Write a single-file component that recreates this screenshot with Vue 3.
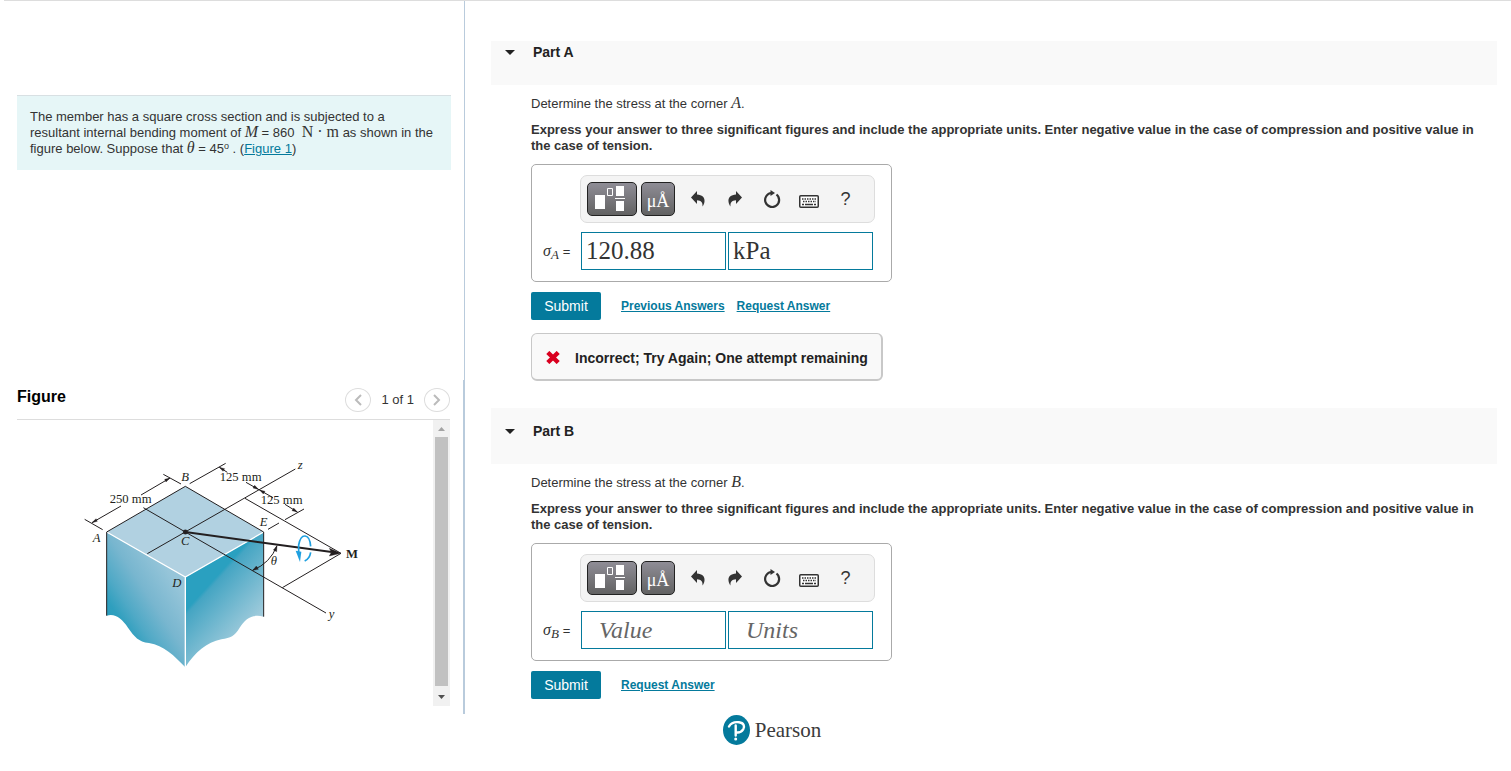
<template>
  <div class="page">
    <div class="columns">
      <aside class="left">
        <div class="intro">
          The member has a square cross section and is subjected to a resultant internal bending moment of
          <i class="math">M</i> = 860 &nbsp;<span class="math">N · m</span> as shown in the figure below. Suppose that
          <i class="math">θ</i> = 45<span class="deg">o</span> . (<a href="#figure">Figure 1</a>)
        </div>

        <section id="figure" class="figure">
          <div class="figure-head">
            <h2>Figure</h2>
            <div class="pager">
              <button type="button" class="round" aria-label="Previous figure">
                <svg width="10" height="14" viewBox="0 0 10 14"><path d="M8 2L3 7l5 5" /></svg>
              </button>
              <span>1 of 1</span>
              <button type="button" class="round" aria-label="Next figure">
                <svg width="10" height="14" viewBox="0 0 10 14"><path d="M2 2l5 5-5 5" /></svg>
              </button>
            </div>
          </div>
          <div class="figure-body">
            <svg class="diagram" width="300" height="230" viewBox="0 0 900 690">
              <defs>
                <linearGradient id="faceL" gradientUnits="userSpaceOnUse" x1="110" y1="512" x2="301" y2="386">
                  <stop offset="0" stop-color="#2a9dbd" />
                  <stop offset="0.12" stop-color="#2f9fbe" />
                  <stop offset="0.3" stop-color="#4fa9c6" />
                  <stop offset="0.6" stop-color="#78b6cf" />
                  <stop offset="1" stop-color="#96c5d9" />
                </linearGradient>
                <linearGradient id="faceR" gradientUnits="userSpaceOnUse" x1="346" y1="396" x2="534" y2="566">
                  <stop offset="0" stop-color="#2aa0c0" />
                  <stop offset="0.27" stop-color="#2aa0c0" />
                  <stop offset="0.31" stop-color="#45a5c3" />
                  <stop offset="1" stop-color="#a4cddd" />
                </linearGradient>
              </defs>
              <path fill="url(#faceL)" d="M110 261L346 396V667C312 632 282 601 237 594C205 590 194 576 174 548C155 521 137 505 110 512Z" />
              <path fill="url(#faceR)" d="M346 396L581 261V515C548 507 527 519 509 548C493 575 483 577 454 583C410 592 375 622 346 667Z" />
              <path fill="#b1d1e1" d="M346 124L581 261L346 396L110 261Z" />
              <path class="edge" d="M110 261L346 396L581 261M346 396V667" />
              <g class="line">
                <path d="M110 512V261L346 124L581 261V515" />
                <path d="M220 188L346 261L768 504M232 326L676 72" />
                <path d="M525 160L813 325L637 428" />
                <path d="M44 223L98 254M280 88L333 117M66 233L153 183M213 150L300 99" />
                <path d="M359 116L467 55M448 67L472 82M528 112L609 158M645 178L682 201" />
                <path d="M594 253L627 234M645 224L702 192" />
                <path d="M548 376Q601 354 621 302" />
              </g>
              <g class="fill">
                <path d="M66 233l12-12 4 8zM300 99l-12 12-4-8zM448 67l16 4-5 8zM565 133l-16-4 5-8zM569 135l16 4-5 8zM682 201l-16-4 5-8z" />
                <path d="M548 376l11-13 6 10zM621 302l-1 18-10-5z" />
                <circle cx="346" cy="261" r="7" />
                <path d="M813 325L778 333L784 322L778 310Z" />
              </g>
              <path class="moment" d="M346 261L785 321" />
              <path class="turn" d="M722 304C719 265 693 262 686 300V324M704 348Q719 341 722 322" />
              <path fill="#1fa0e0" d="M677 317l17 3-4 31z" />
              <g class="text">
                <text x="119" y="174">250 mm</text>
                <text x="449" y="109">125 mm</text>
                <text x="572" y="177">125 mm</text>
                <g class="var">
                  <text x="334" y="109">B</text>
                  <text x="68" y="290">A</text>
                  <text x="333" y="300">C</text>
                  <text x="307" y="425">D</text>
                  <text x="569" y="244">E</text>
                  <text x="683" y="71">z</text>
                  <text x="776" y="519">y</text>
                  <text x="602" y="361">θ</text>
                </g>
                <text class="strong" x="828" y="339">M</text>
              </g>
            </svg>
            <div class="scroll">
              <svg width="17" height="17" viewBox="0 0 17 17"><path fill="#a3a3a3" d="M5 11l3.5-4 3.5 4z" /></svg>
              <div class="thumb"></div>
              <svg width="17" height="20" viewBox="0 0 17 20"><path fill="#505050" d="M5 9l3.5 4 3.5-4z" /></svg>
            </div>
          </div>
        </section>
      </aside>

      <main class="right">
        <section v-for="part in parts" :key="part.name" class="part">
          <header class="part-head">
            <svg width="10" height="5" viewBox="0 0 10 5"><path fill="#222" d="M0 0h10L5 5z" /></svg>
            <h2>Part {{ part.name }}</h2>
          </header>
          <div class="part-body">
            <p>Determine the stress at the corner <i class="math">{{ part.name }}</i>.</p>
            <p class="instructions">
              Express your answer to three significant figures and include the appropriate units. Enter negative value in
              the case of compression and positive value in the case of tension.
            </p>

            <div class="answer">
              <div class="toolbar">
                <button type="button" class="dark wide" aria-label="Templates">
                  <svg width="34" height="26" viewBox="0 0 34 26">
                    <path fill="#fff" d="M0 9h10v14H0zM21 0h8v10h-8zM21 15h8v10h-8zM20 12h10v1H20z" />
                    <path fill="none" stroke="#fff" d="M12.5 2.5h5v7h-5z" />
                  </svg>
                </button>
                <button type="button" class="dark units">μÅ</button>
                <div class="tools">
                  <button type="button" aria-label="Undo">
                    <svg width="14" height="16" viewBox="0 0 14 16">
                      <path fill="#333" d="M6 0v3.5c5 .3 8 3 7.500 7-.2 2-1 3.700-2 5 .3-4-1.200-6-5.500-6.200V13L0 6.500z" />
                    </svg>
                  </button>
                  <button type="button" aria-label="Redo">
                    <svg width="14" height="16" viewBox="0 0 14 16">
                      <path fill="#333" d="M8 0v3.500C3 3.800 0 6.500.5 10.500c.2 2 1 3.700 2 5-.3-4 1.200-6 5.500-6.200V13l6-6.500z" />
                    </svg>
                  </button>
                  <button type="button" aria-label="Reset">
                    <svg width="18" height="18" viewBox="0 0 18 18">
                      <path fill="none" stroke="#333" stroke-width="2.200" d="M13.500 4.500A7 7 0 1 1 8.500 3" />
                      <path fill="#333" d="M7.500 0l4.500 3-4.500 3z" />
                    </svg>
                  </button>
                  <button type="button" aria-label="Keyboard shortcuts">
                    <svg class="keys" width="20" height="13" viewBox="0 0 20 13">
                      <rect x="0.750" y="0.750" width="18.500" height="11.500" rx="1" fill="#fff" stroke="#333" stroke-width="1.500" />
                      <path stroke="#333" stroke-width="1.500" stroke-dasharray="1.500 1" d="M3 4h14M4 6.500h13" />
                      <path stroke="#333" stroke-width="1.500" d="M3 9.500h2M6 9.500h8M15 9.500h2" />
                    </svg>
                  </button>
                  <button type="button" class="help" aria-label="Help">?</button>
                </div>
              </div>
              <div class="fields">
                <label :for="'value' + part.name"><i>σ</i><i class="sub">{{ part.name }}</i> <span>=</span></label>
                <input :id="'value' + part.name" v-model="part.value" type="text" placeholder="Value" />
                <input v-model="part.units" type="text" placeholder="Units" aria-label="Units" />
              </div>
            </div>

            <div class="actions">
              <button type="button" class="submit">Submit</button>
              <a v-for="link in part.links" :key="link" href="#">{{ link }}</a>
            </div>

            <div v-if="part.feedback" class="feedback">
              <svg width="14" height="13" viewBox="0 0 14 13">
                <path fill="none" stroke="#d9001f" stroke-width="4.400" d="M1.800 1.500l10.400 10M12.200 1.500l-10.400 10" />
              </svg>
              <strong>{{ part.feedback }}</strong>
            </div>
          </div>
        </section>
      </main>
    </div>

    <footer class="footer">
      <svg width="28" height="30" viewBox="0 0 28 30">
        <ellipse cx="13.500" cy="15" rx="13.500" ry="15" fill="#047a9c" />
        <path
          fill="none"
          stroke="#fff"
          stroke-width="2.400"
          stroke-linecap="round"
          d="M6 11.500C8 8 12 6.800 16 7.300c5 .6 6 4.200 4.200 7-1.700 2.500-4.700 3.600-7.400 3M12.700 10.500v10"
        />
        <circle cx="12.700" cy="24" r="1.500" fill="#fff" />
      </svg>
      <span>Pearson</span>
    </footer>
  </div>
</template>

<script setup>
import { ref } from 'vue'

const parts = ref([
  {
    name: 'A',
    value: '120.88',
    units: 'kPa',
    links: ['Previous Answers', 'Request Answer'],
    feedback: 'Incorrect; Try Again; One attempt remaining'
  },
  {
    name: 'B',
    value: '',
    units: '',
    links: ['Request Answer'],
    feedback: ''
  }
])
</script>

<style>
body {
  margin: 0;
  background: #fff;
}
</style>

<style scoped>
* {
  box-sizing: border-box;
}

.page {
  font: 13px/16px "Liberation Sans", Arial, sans-serif;
  color: #333;
}

.page::before {
  content: "";
  display: block;
  height: 1px;
  margin-left: 4px;
  background: #ddd;
}

button {
  font-family: inherit;
  padding: 0;
  border: 0;
  background: none;
  cursor: pointer;
}

h2,
p {
  margin: 0;
}

a {
  color: #047a9c;
}

.columns {
  display: grid;
  grid-template-columns: 464px 1fr;
}

/* left column */
.left {
  display: flex;
  flex-direction: column;
  justify-content: space-between;
  padding: 94px 0 0 17px;
}

.intro {
  margin-right: 13px;
  padding: 13px;
  background: #e6f6f7;
  border-top: 1px solid #d8e0e3;
}

.math {
  font-family: "Liberation Serif", serif;
  font-size: 16px;
  line-height: 0;
}

.deg {
  font-size: 9px;
  line-height: 0;
  vertical-align: 4px;
}

.figure {
  padding: 0 13px 8px 0;
  border-right: 1px solid #b9cbdc;
}

.figure-head {
  display: flex;
  justify-content: space-between;
  align-items: center;
  height: 40px;
  border-bottom: 1px solid #ddd;
}

.figure-head h2 {
  font-size: 16px;
  line-height: 20px;
  padding-bottom: 6px;
  color: #000;
}

.pager {
  display: flex;
  align-items: center;
  gap: 10px;
}

.round {
  display: flex;
  align-items: center;
  justify-content: center;
  width: 26px;
  height: 24px;
  border: 1px solid #ddd;
  border-radius: 50%;
}

.round path {
  fill: none;
  stroke: #bbb;
  stroke-width: 2;
}

.figure-body {
  display: flex;
  justify-content: space-between;
  height: 286px;
}

.diagram {
  margin: 25px 0 0 53px;
}

.line path {
  fill: none;
  stroke: #231f20;
  stroke-width: 3;
}

.edge {
  fill: none;
  stroke: #fff;
  stroke-width: 4;
}

.fill {
  fill: #231f20;
  stroke: #231f20;
  stroke-width: 1;
}

.moment {
  stroke: #231f20;
  stroke-width: 6;
}

.turn {
  fill: none;
  stroke: #1fa0e0;
  stroke-width: 5;
}

.text {
  font: 38px "Liberation Serif", serif;
  fill: #231f20;
}

.var {
  font-style: italic;
}

.strong {
  font-weight: bold;
}

.scroll {
  display: flex;
  flex-direction: column;
  width: 17px;
  background: #f1f1f1;
}

.thumb {
  flex: 1;
  margin: 0 2px;
  background: #c1c1c1;
}

/* right column */
.right {
  padding: 40px 14px 15px 26px;
  border-left: 1px solid #b9cbdc;
}

.part-head {
  display: flex;
  align-items: center;
  gap: 18px;
  padding: 12px 14px 22px;
  background: #f9f9f9;
}

.part:first-child .part-head {
  padding-top: 0;
}

.part-head h2 {
  font-size: 14px;
  line-height: 22px;
  color: #222;
}

.part-body {
  padding: 11px 14px 0 40px;
}

.instructions {
  margin: 10px 0;
  font-weight: bold;
}

.answer {
  width: 361px;
  padding: 10px 16px 11px 0;
  border: 1px solid #aaa;
  border-radius: 5px;
}

.toolbar {
  display: flex;
  align-items: center;
  gap: 4px;
  height: 48px;
  margin-left: 48px;
  padding: 0 6px;
  background: #f4f4f4;
  border: 1px solid #ddd;
  border-radius: 7px;
}

.dark {
  display: flex;
  align-items: center;
  justify-content: center;
  width: 34px;
  height: 34px;
  font: 18px/24px "Liberation Serif", serif;
  color: #fff;
  background: linear-gradient(#8f8d96, #626262);
  border: 1px solid #222;
  border-radius: 5px;
}

.wide {
  width: 50px;
}

.units {
  padding-top: 4px;
}

.tools {
  display: flex;
}

.tools button {
  display: flex;
  align-items: center;
  justify-content: center;
  width: 37px;
  height: 34px;
}

.keys {
  margin-top: 4px;
}

.tools .help {
  font-size: 18px;
  color: #333;
}

.fields {
  display: flex;
  align-items: center;
  gap: 2px;
  margin-top: 9px;
}

.fields label {
  width: 47px;
  padding-left: 11px;
  font-family: "Liberation Serif", serif;
  font-size: 16px;
  white-space: nowrap;
}

.fields .sub {
  font-size: 13px;
  line-height: 0;
  vertical-align: -3px;
}

.fields span {
  font: 13px "Liberation Sans", sans-serif;
}

.fields input {
  width: 145px;
  height: 38px;
  padding: 0 4px;
  font: 25px "Liberation Serif", serif;
  color: #333;
  background: #fff;
  border: 1px solid #047a9c;
  border-radius: 0;
}

.fields input::placeholder {
  font-style: italic;
  color: #666;
  opacity: 1;
}

.fields input:placeholder-shown {
  padding-left: 17px;
  font-size: 24px;
}

.actions {
  display: flex;
  align-items: center;
  gap: 12px;
  margin-top: 10px;
}

.actions a {
  font-size: 12px;
  font-weight: bold;
}

.submit {
  width: 70px;
  height: 28px;
  margin-right: 8px;
  font-size: 14px;
  color: #fff;
  background: #047a9c;
  border-radius: 2px;
}

.feedback {
  display: flex;
  align-items: center;
  gap: 15px;
  width: 352px;
  height: 48px;
  margin: 13px 0 27px;
  padding: 2px 0 0 14px;
  font-size: 14px;
  color: #222;
  background: #f9f9f9;
  border: 1px solid #c8c8c8;
  border-right-width: 2px;
  border-bottom-width: 2px;
  border-radius: 6px;
}

.footer {
  display: flex;
  align-items: center;
  justify-content: center;
  gap: 4px;
  padding: 1px 0 0 33px;
  font: 21px/30px "Liberation Serif", serif;
  color: #3b3b3b;
}
</style>
